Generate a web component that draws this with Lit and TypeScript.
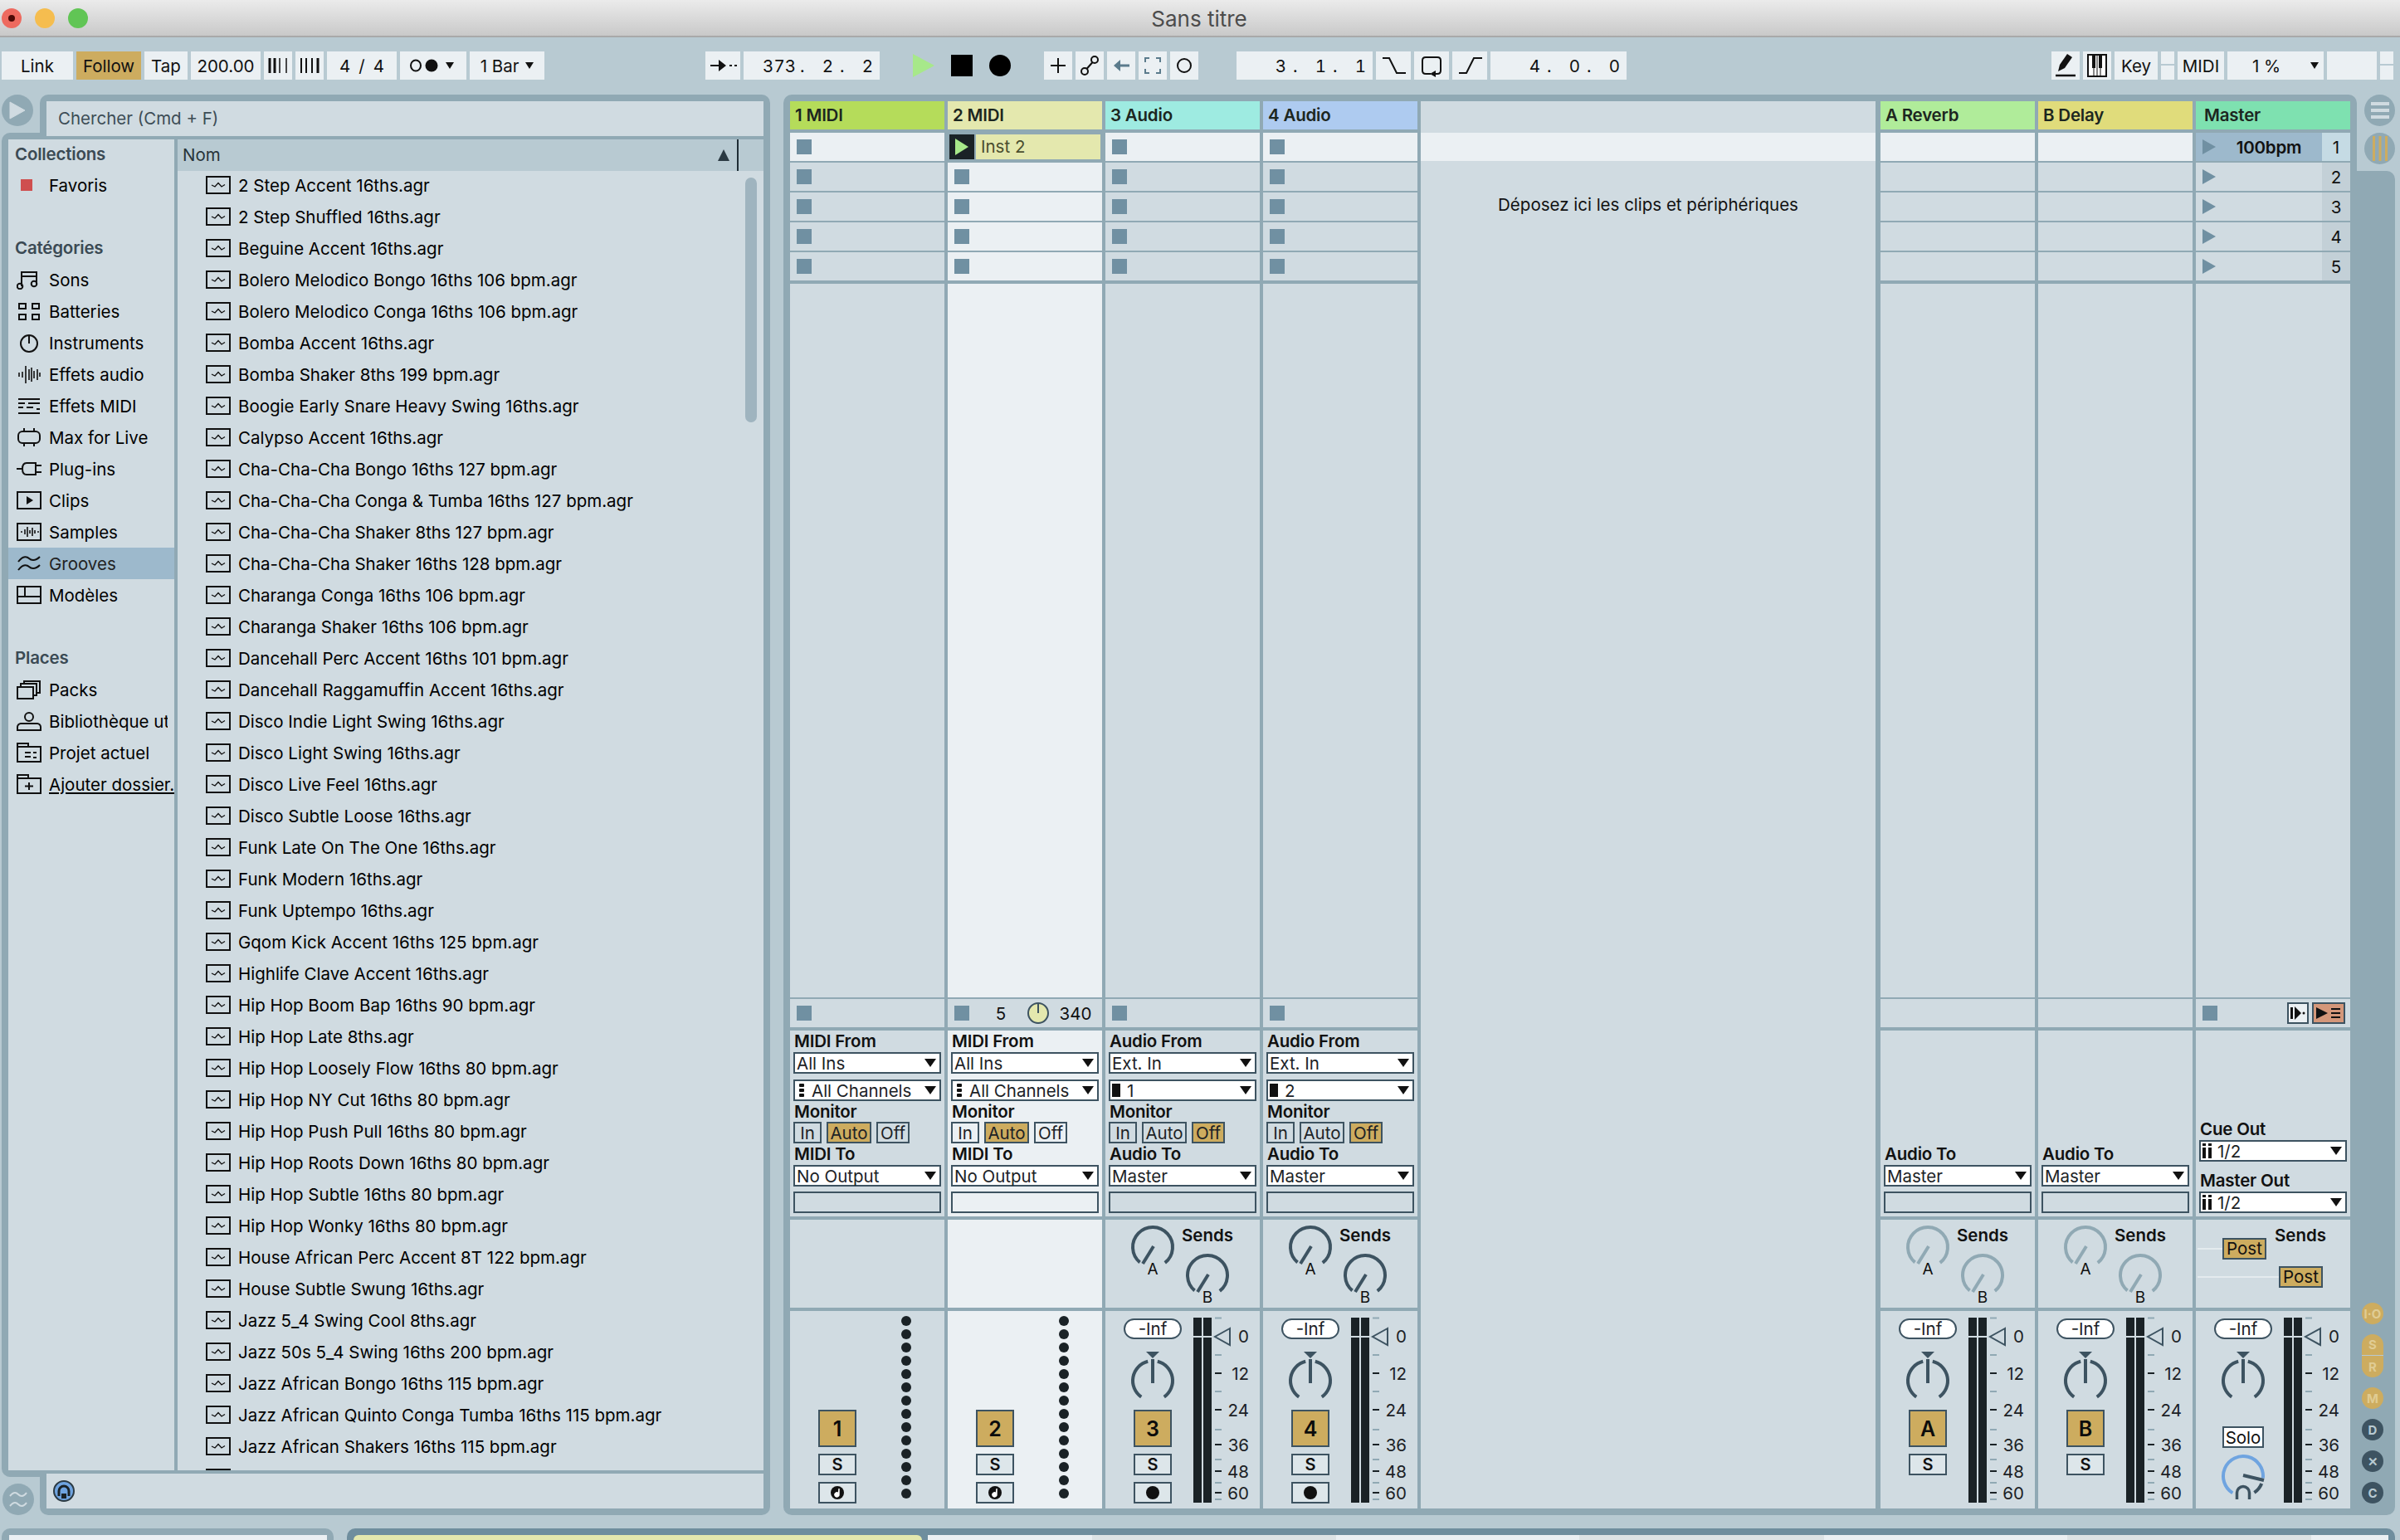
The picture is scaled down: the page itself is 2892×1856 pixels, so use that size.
import { LitElement, html, css, svg } from "lit";
import { customElement } from "lit/decorators.js";

const pt = (cx: number, cy: number, r: number, a: number) => {
  const t = (a * Math.PI) / 180;
  return [cx + r * Math.sin(t), cy - r * Math.cos(t)];
};
const arc = (cx: number, cy: number, r: number, a0: number, a1: number) => {
  const [x0, y0] = pt(cx, cy, r, a0);
  const [x1, y1] = pt(cx, cy, r, a1);
  return `M${x0.toFixed(2)} ${y0.toFixed(2)}A${r} ${r} 0 ${a1 - a0 > 180 ? 1 : 0} 1 ${x1.toFixed(2)} ${y1.toFixed(2)}`;
};

const GROOVES = [
  "2 Step Accent 16ths.agr", "2 Step Shuffled 16ths.agr", "Beguine Accent 16ths.agr",
  "Bolero Melodico Bongo 16ths 106 bpm.agr", "Bolero Melodico Conga 16ths 106 bpm.agr", "Bomba Accent 16ths.agr",
  "Bomba Shaker 8ths 199 bpm.agr", "Boogie Early Snare Heavy Swing 16ths.agr", "Calypso Accent 16ths.agr",
  "Cha-Cha-Cha Bongo 16ths 127 bpm.agr", "Cha-Cha-Cha Conga & Tumba 16ths 127 bpm.agr", "Cha-Cha-Cha Shaker 8ths 127 bpm.agr",
  "Cha-Cha-Cha Shaker 16ths 128 bpm.agr", "Charanga Conga 16ths 106 bpm.agr", "Charanga Shaker 16ths 106 bpm.agr",
  "Dancehall Perc Accent 16ths 101 bpm.agr", "Dancehall Raggamuffin Accent 16ths.agr", "Disco Indie Light Swing 16ths.agr",
  "Disco Light Swing 16ths.agr", "Disco Live Feel 16ths.agr", "Disco Subtle Loose 16ths.agr",
  "Funk Late On The One 16ths.agr", "Funk Modern 16ths.agr", "Funk Uptempo 16ths.agr",
  "Gqom Kick Accent 16ths 125 bpm.agr", "Highlife Clave Accent 16ths.agr", "Hip Hop Boom Bap 16ths 90 bpm.agr",
  "Hip Hop Late 8ths.agr", "Hip Hop Loosely Flow 16ths 80 bpm.agr", "Hip Hop NY Cut 16ths 80 bpm.agr",
  "Hip Hop Push Pull 16ths 80 bpm.agr", "Hip Hop Roots Down 16ths 80 bpm.agr", "Hip Hop Subtle 16ths 80 bpm.agr",
  "Hip Hop Wonky 16ths 80 bpm.agr", "House African Perc Accent 8T 122 bpm.agr", "House Subtle Swung 16ths.agr",
  "Jazz 5_4 Swing Cool 8ths.agr", "Jazz 50s 5_4 Swing 16ths 200 bpm.agr", "Jazz African Bongo 16ths 115 bpm.agr",
  "Jazz African Quinto Conga Tumba 16ths 115 bpm.agr", "Jazz African Shakers 16ths 115 bpm.agr", "",
];

const si = (body: unknown) =>
  html`<svg class="si" viewBox="0 0 30 24" fill="none" stroke="#111" stroke-width="2">${body}</svg>`;

const ICONS: Record<string, unknown> = {
  sons: si(svg`<path d="M6 20V3H24V17M6 8H24"/><circle cx="4" cy="20" r="3.3"/><circle cx="21" cy="17" r="3.3"/>`),
  batteries: si(svg`<rect x="3" y="3" width="8" height="6"/><rect x="19" y="3" width="8" height="6"/><rect x="3" y="16" width="8" height="6"/><rect x="19" y="16" width="8" height="6"/>`),
  instruments: si(svg`<circle cx="15" cy="13" r="10"/><path d="M15 3V13"/>`),
  audio: si(svg`<path stroke-width="1.6" d="M3 10V15M7 9V16M11 2V23M15 6V19M18 4V21M21 8V17M25 6V19M28 10V15"/>`),
  midi: si(svg`<path stroke-width="1.8" d="M2 4H28M2 9H10M14 9H28M2 14H8M12 14H20M2 21H28M24 16H28"/>`),
  max: si(svg`<rect x="2" y="5" width="26" height="14" rx="5"/><path d="M9 1V5M21 1V5M9 19V23M21 19V23"/>`),
  plug: si(svg`<path d="M0 12H7M7 12C7 7 9 5 12 5H23V19H12C9 19 7 17 7 12ZM23 8H30M23 16H30"/>`),
  clips: si(svg`<rect x="1" y="2" width="28" height="20"/><path fill="#111" stroke="none" d="M12 7L20 12L12 17Z"/>`),
  samples: si(svg`<rect x="1" y="2" width="28" height="20"/><path stroke-width="1.6" d="M5 12H7M10 9V15M13 6V18M16 10V14M19 7V17M22 10V14M25 12H27"/>`),
  grooves: si(svg`<path d="M2 10C8 2 13 4 15 6S22 10 28 4M2 20C8 12 13 14 15 16S22 20 28 14"/>`),
  modeles: si(svg`<rect x="1" y="2" width="28" height="20"/><path d="M1 14H29M10 2V14"/>`),
  packs: si(svg`<rect x="1" y="9" width="19" height="14"/><path d="M5 9V5H24V19H20M9 5V2H28V16H24"/>`),
  lib: si(svg`<circle cx="15" cy="7" r="5"/><path d="M1 23V19C1 17 3 15 5 15H25C27 15 29 17 29 19V23Z"/>`),
  proj: si(svg`<path d="M1 23V1H14V5H29V23ZM1 5H14M10 12H17M10 17H17M20 12H24M20 18H24"/>`),
  add: si(svg`<path d="M1 23V1H14V5H29V23ZM1 5H14M15 10V19M10 14.5H20"/>`),
};

const CATS: [string, string][] = [
  ["sons", "Sons"], ["batteries", "Batteries"], ["instruments", "Instruments"], ["audio", "Effets audio"], ["midi", "Effets MIDI"],
  ["max", "Max for Live"], ["plug", "Plug-ins"], ["clips", "Clips"], ["samples", "Samples"], ["grooves", "Grooves"], ["modeles", "Modèles"],
];
const PLACES: [string, string][] = [["packs", "Packs"], ["lib", "Bibliothèque utilisateur"], ["proj", "Projet actuel"], ["add", "Ajouter dossier..."]];

const groove = html`<svg class="gi" viewBox="0 0 30 22" fill="none"><rect x="1" y="1" width="28" height="20" stroke="#111" stroke-width="2"/><path d="M7 11L11 13L15 8.5L19 13L23 10.5" stroke="#111" stroke-width="1.3"/></svg>`;

const tb = (w: number, inner: unknown, cls = "") => html`<div class="tb ${cls}" style="width:${w}px">${inner}</div>`;
const tsvg = (body: unknown, w = 34) => html`<svg width=${w} height="34" viewBox="0 0 ${w} 34" fill="none" stroke="#111" stroke-width="2">${body}</svg>`;
const drop = html`<svg class="ddt" width="10" height="10" viewBox="0 0 10 10"><path d="M0 1H10L5 9Z" fill="#111"/></svg>`;
const seg = (a: string, b: string, c: string) =>
  html`<div class="seg"><span class="d w ${a.length > 1 ? "n3" : ""}">${a}</span><span class="p">.</span><span class="d">${b}</span><span class="p">.</span><span class="d">${c}</span></div>`;

type Kind = "midi" | "audio" | "ret" | "master";
interface Track { name: string; color: string; kind: Kind; num: string; ch?: string; hl?: boolean; }
const TRACKS: Track[] = [
  { name: "1 MIDI", color: "#b5dc5a", kind: "midi", num: "1" },
  { name: "2 MIDI", color: "#e4e8ae", kind: "midi", num: "2", hl: true },
  { name: "3 Audio", color: "#9eebe1", kind: "audio", num: "3", ch: "1" },
  { name: "4 Audio", color: "#aecbf0", kind: "audio", num: "4", ch: "2" },
];
const RETURNS: Track[] = [
  { name: "A Reverb", color: "#b0ec9a", kind: "ret", num: "A" },
  { name: "B Delay", color: "#e0dc7b", kind: "ret", num: "B" },
  { name: "Master", color: "#7ee1b0", kind: "master", num: "" },
];

const TICKS_FAINT = [8.5, 53, 97, 143, 179, 207, 227];
const TICKS = [["0", 30.5], ["12", 75], ["24", 119], ["36", 161], ["48", 193], ["60", 219]] as [string, number][];

const DK = "#3d5361";

@customElement("ableton-track")
class AbletonTrack extends LitElement {
  static properties = { t: { attribute: false } };
  t!: Track;

  static styles = css`
    :host { display: flex; flex-direction: column; width: 186px; flex: none; --cell: #d0dbe1; font-size: 20.5px; }
    :host([hl]) { --cell: #ebf0f3; }
    .head { height: 34px; line-height: 34px; padding-left: 6px; font-weight: 600; letter-spacing: -0.2px; color: #1c2620; flex: none; }
    .head.m { padding-left: 10px; }
    .clips { display: flex; flex-direction: column; gap: 2px; margin-top: 4px; flex: none; }
    .clip { height: 34px; background: var(--cell); display: flex; align-items: center; padding-left: 8px; box-sizing: border-box; }
    .clip.sel { background: #ebf0f3; }
    .stop { width: 18px; height: 18px; background: #7090a2; flex: none; }
    .blank { height: 860px; margin-top: 4px; background: var(--cell); flex: none; }
    .playing { padding: 2px; gap: 2px; background: #90a9b4; align-items: stretch; }
    .pbtn { width: 30px; background: #1a2226; display: flex; align-items: center; justify-content: center; }
    .pname { flex: 1; background: #e4e8ae; color: #4a4d2e; padding-left: 6px; line-height: 30px; }
    .scene { padding: 0; }
    .scene .l { width: 152px; height: 100%; display: flex; align-items: center; padding-left: 8px; box-sizing: border-box; }
    .scene .tri { width: 16px; height: 18px; flex: none; }
    .scene .lab { width: 128px; text-align: center; font-weight: 600; color: #111; }
    .scene .n { width: 34px; height: 100%; background: #c3d0d7; display: flex; align-items: center; justify-content: center; color: #111; }
    .scene.on .l { background: #9db9cc; }
    .scene.on .n { background: #c5dbe4; }
    .srow { height: 34px; margin-top: 2px; background: #d0dbe1; display: flex; align-items: center; padding-left: 8px; flex: none; color: #111; }
    .five { width: 36px; margin-left: 20px; text-align: center; }
    .tempo { margin-left: 14px; }
    .beats { width: 44px; margin-left: 10px; text-align: center; }
    .mbtns { margin-left: auto; margin-right: 6px; display: flex; gap: 4px; }
    .mb { height: 26px; border: 2px solid #3d5361; box-sizing: border-box; display: flex; align-items: center; justify-content: center; }
    .io { height: 224px; margin-top: 4px; background: var(--cell); padding: 0 4px 4px; box-sizing: border-box; display: flex; flex-direction: column; flex: none; }
    .io.end { justify-content: flex-end; }
    .lab { height: 26px; line-height: 26px; font-weight: 600; letter-spacing: -0.2px; color: #111; padding-left: 1px; flex: none; white-space: nowrap; }
    .lab.mon { height: 25px; }
    .ch { height: 26px; border: 2px solid #3d5361; background: #fff; box-sizing: border-box; display: flex; align-items: center; padding: 0 4px 0 2px; color: #1c2226; flex: none; gap: 6px; }
    .ch.gap { margin-top: 7px; }
    .ch .tx { flex: 1; white-space: nowrap; }
    .ch.gapm { margin-bottom: 10px; }
    .box { height: 26px; margin-top: 6px; border: 2px solid #3d5361; box-sizing: border-box; flex: none; }
    .mon-row { display: flex; gap: 6px; height: 26px; flex: none; }
    .mon-b { height: 26px; border: 2px solid #3d5361; box-sizing: border-box; display: flex; align-items: center; justify-content: center; color: #1c2226; }
    .on { background: #cdac5f; }
    .sends { height: 106px; margin-top: 4px; background: var(--cell); flex: none; }
    .sends svg { display: block; }
    .svgt { font: 600 20.5px Inter, "Liberation Sans", sans-serif; fill: #111; }
    .sendbtn { fill: #cdac5f; stroke: #3d5361; stroke-width: 2; }
    .mixer { height: 238px; margin-top: 4px; background: var(--cell); display: flex; flex: none; }
    .ml { width: 106px; padding-left: 8px; box-sizing: border-box; display: flex; flex-direction: column; align-items: center; flex: none; }
    .pill { width: 70px; height: 25px; margin-top: 9px; border: 2px solid #3d5361; border-radius: 13px; background: #fff; box-sizing: border-box; display: flex; align-items: center; justify-content: center; color: #1c2226; flex: none; }
    .ph { height: 62px; width: 60px; margin-top: 15px; flex: none; }
    .act { width: 46px; height: 45px; margin-top: 8px; border: 2px solid #3d5361; background: #cdac5f; box-sizing: border-box; display: flex; align-items: center; justify-content: center; font-size: 25px; font-weight: 600; color: #0c0c0c; flex: none; }
    .mini { width: 46px; height: 26px; margin-top: 8px; border: 2px solid #3d5361; background: #dde6ea; box-sizing: border-box; display: flex; align-items: center; justify-content: center; color: #111; font-weight: 600; font-size: 20px; flex: none; }
    .solo { width: 50px; height: 26px; margin-top: 8px; border: 2px solid #3d5361; background: #fff; box-sizing: border-box; display: flex; align-items: center; justify-content: center; color: #111; flex: none; }
    .solo.m { margin-top: 28px; }
    .cue { margin-top: 4px; width: 60px; height: 62px; flex: none; }
    .armdot { width: 16px; height: 16px; border-radius: 50%; background: #111; }
    .spacer { height: 111px; flex: none; }
    .dots { display: flex; flex-direction: column; gap: 4px; margin-left: 28px; padding-top: 6px; }
    .dot { width: 12px; height: 12px; border-radius: 50%; background: #1a2226; }
    .meter { display: flex; gap: 2px; padding-top: 8px; height: 223px; flex: none; }
    .bar { width: 10px; display: flex; flex-direction: column; gap: 2px; height: 223px; }
    .bar i { display: block; background: #1a2226; }
    .bar .a { height: 22px; }
    .bar .b { flex: 1; }
    .scale { flex: none; display: block; }
  `;

  private chooser(text: string, icon: unknown = null, cls = "") {
    return html`<div class="ch ${cls}">${icon}<span class="tx">${text}</span><svg width="14" height="12" viewBox="0 0 14 12"><path d="M0 1H14L7 11Z" fill="#111"/></svg></div>`;
  }

  private monitor(active: string) {
    const widths: Record<string, number> = { In: 34, Auto: 54, Off: 40 };
    return html`<div class="mon-row">${["In", "Auto", "Off"].map((m) => html`<div class="mon-b ${m === active ? "on" : ""}" style="width:${widths[m]}px">${m}</div>`)}</div>`;
  }

  private io(t: Track) {
    const dots = html`<svg width="8" height="18" viewBox="0 0 8 18" style="margin-left:2px;margin-right:2px"><rect x="1" y="1" width="6" height="4" rx="1" fill="#111"/><rect x="1" y="7" width="6" height="4" rx="1" fill="#111"/><rect x="1" y="13" width="6" height="4" rx="1" fill="#111"/></svg>`;
    const mono = html`<svg width="10" height="16" viewBox="0 0 10 16" style="margin-right:2px"><rect width="10" height="16" fill="#111"/></svg>`;
    const ii = html`<svg width="12" height="18" viewBox="0 0 12 18"><rect x="0" y="0" width="4" height="3" fill="#111"/><rect x="7" y="0" width="4" height="3" fill="#111"/><rect x="0" y="5" width="4" height="13" fill="#111"/><rect x="7" y="5" width="4" height="13" fill="#111"/></svg>`;
    if (t.kind === "midi")
      return html`<div class="io"><div class="lab">MIDI From</div>${this.chooser("All Ins")}${this.chooser("All Channels", dots, "gap")}<div class="lab mon">Monitor</div>${this.monitor("Auto")}<div class="lab">MIDI To</div>${this.chooser("No Output")}<div class="box"></div></div>`;
    if (t.kind === "audio")
      return html`<div class="io"><div class="lab">Audio From</div>${this.chooser("Ext. In")}${this.chooser(t.ch!, mono, "gap")}<div class="lab mon">Monitor</div>${this.monitor("Off")}<div class="lab">Audio To</div>${this.chooser("Master")}<div class="box"></div></div>`;
    if (t.kind === "ret")
      return html`<div class="io end"><div class="lab">Audio To</div>${this.chooser("Master")}<div class="box"></div></div>`;
    return html`<div class="io end"><div class="lab">Cue Out</div>${this.chooser("1/2", ii, "gapm")}<div class="lab">Master Out</div>${this.chooser("1/2", ii)}</div>`;
  }

  private sends(t: Track) {
    if (t.kind === "midi") return html`<div class="sends"></div>`;
    if (t.kind === "master")
      return html`<div class="sends"><svg width="186" height="106">
        <path d="M2 35H32M2 69H100" stroke="#e4ebee" stroke-width="2"/>
        <rect x="33" y="23" width="51" height="24" class="sendbtn"/><text x="58.5" y="42" text-anchor="middle" class="svgt" style="font-weight:400">Post</text>
        <text x="126" y="26" text-anchor="middle" class="svgt">Sends</text>
        <rect x="101" y="57" width="51" height="24" class="sendbtn"/><text x="126.5" y="76" text-anchor="middle" class="svgt" style="font-weight:400">Post</text>
      </svg></div>`;
    const col = t.kind === "ret" ? "#90a9b4" : DK;
    const knob = (cx: number, cy: number, l: string) => svg`
      <path d=${arc(cx, cy, 24, -140, 142)} fill="none" stroke=${col} stroke-width="4"/>
      <path d="M${cx + 1} ${cy - 1}L${cx - 12} ${cy + 20}" stroke=${col} stroke-width="4"/>
      <text x=${cx} y=${cy + 33} text-anchor="middle" class="svgt" style="font-weight:400;font-size:19px">${l}</text>`;
    return html`<div class="sends"><svg width="186" height="106">
      ${knob(57, 33, "A")}${knob(123, 67, "B")}
      <text x="123" y="26" text-anchor="middle" class="svgt">Sends</text>
    </svg></div>`;
  }

  private mixer(t: Track) {
    const panKnob = html`<svg class="ph" viewBox="0 0 60 62" fill="none" stroke=${DK} stroke-width="4">
      <path d="M22 0H38L30 8Z" fill=${DK} stroke="none"/>
      <path d=${arc(30, 35, 24, -145, -14)}/><path d=${arc(30, 35, 24, 14, 145)}/><path d="M30 9V38"/></svg>`;
    const meter = html`<div class="meter"><div class="bar"><i class="a"></i><i class="b"></i></div><div class="bar"><i class="a"></i><i class="b"></i></div></div>
      <svg class="scale" width="58" height="238" viewBox="128 0 58 238">
        ${TICKS_FAINT.map((y) => svg`<path d="M132 ${y}H140" stroke="#90a9b4" stroke-width="2"/>`)}
        ${TICKS.slice(1).map(([, y]) => svg`<path d="M132 ${y}H140" stroke="#1a2226" stroke-width="2"/>`)}
        <path d="M150 21L132 31L150 41Z" fill="none" stroke=${DK} stroke-width="2"/>
        ${TICKS.map(([l, y]) => svg`<text x="173" y=${y + 7.5} text-anchor="end" class="svgt" style="font-weight:400;fill:#1c2226">${l}</text>`)}
      </svg>`;
    if (t.kind === "midi")
      return html`<div class="mixer"><div class="ml"><div class="spacer"></div><div class="act">${t.num}</div><div class="mini">S</div>
        <div class="mini"><svg width="18" height="18" viewBox="0 0 18 18"><circle cx="9" cy="9" r="8" fill="#111"/><path d="M11 4V11A2.6 2.6 0 1 1 9.5 9" fill="#fff" stroke="#fff" stroke-width="1.4"/></svg></div></div>
        <div class="dots">${Array.from({ length: 14 }, () => html`<div class="dot"></div>`)}</div></div>`;
    if (t.kind === "audio")
      return html`<div class="mixer"><div class="ml"><div class="pill">-Inf</div>${panKnob}<div class="act">${t.num}</div><div class="mini">S</div><div class="mini"><div class="armdot"></div></div></div>${meter}</div>`;
    if (t.kind === "ret")
      return html`<div class="mixer"><div class="ml"><div class="pill">-Inf</div>${panKnob}<div class="act">${t.num}</div><div class="mini">S</div></div>${meter}</div>`;
    return html`<div class="mixer"><div class="ml"><div class="pill">-Inf</div>${panKnob}<div class="solo m">Solo</div>
      <svg class="cue" viewBox="0 0 60 62" fill="none">
        <path d=${arc(30, 30, 24, -148, 96)} stroke="#6fa4e0" stroke-width="4"/>
        <path d=${arc(30, 30, 24, 112, 146)} stroke=${DK} stroke-width="4"/>
        <path d="M30 29L55 35" stroke=${DK} stroke-width="4"/>
        <path d="M22.5 58V50A7.5 7.5 0 0 1 37.5 50V58" stroke=${DK} stroke-width="3.5"/>
      </svg></div>${meter}</div>`;
  }

  render() {
    const t = this.t;
    if (t.kind === "master") {
      return html`<div class="head m" style="background:${t.color}">${t.name}</div>
      <div class="clips">${[1, 2, 3, 4, 5].map((n) => html`<div class="clip scene ${n === 1 ? "on" : ""}"><div class="l"><svg class="tri" viewBox="0 0 16 18"><path d="M0 0L16 9L0 18Z" fill="#7090a2"/></svg><span class="lab" style="padding:0;height:auto;line-height:normal">${n === 1 ? "100bpm" : ""}</span></div><div class="n">${n}</div></div>`)}</div>
      <div class="blank"></div>
      <div class="srow"><div class="stop"></div><div class="mbtns">
        <div class="mb" style="width:26px;background:#ebf0f3"><svg width="18" height="16" viewBox="0 0 18 16"><rect x="0" y="1" width="3" height="14" fill="#111"/><path d="M5 0L13 8L5 16Z" fill="#111"/><circle cx="16" cy="8" r="1.5" fill="#111"/></svg></div>
        <div class="mb" style="width:40px;background:#d4977a"><svg width="30" height="14" viewBox="0 0 30 14"><path d="M0 0L14 7L0 14Z" fill="#111"/><path d="M18 2H29M18 7H29M18 12H29" stroke="#111" stroke-width="2"/></svg></div>
      </div></div>
      ${this.io(t)}${this.sends(t)}${this.mixer(t)}`;
    }
    const clipRows = [0, 1, 2, 3, 4].map((r) => {
      if (t.hl && r === 0)
        return html`<div class="clip playing"><div class="pbtn"><svg width="16" height="20" viewBox="0 0 16 20"><path d="M0 0L16 10L0 20Z" fill="#a7e88a"/></svg></div><div class="pname">Inst 2</div></div>`;
      const cls = r === 0 ? "sel" : "";
      return html`<div class="clip ${cls}">${t.kind === "ret" ? "" : html`<div class="stop"></div>`}</div>`;
    });
    return html`<div class="head" style="background:${t.color}">${t.name}</div>
    <div class="clips">${clipRows}</div>
    <div class="blank"></div>
    <div class="srow">${t.kind === "ret" ? "" : html`<div class="stop"></div>`}
      ${t.hl ? html`<div class="five">5</div><svg class="tempo" width="26" height="26" viewBox="0 0 26 26"><circle cx="13" cy="13" r="12" fill="#e4e8ae" stroke=${DK} stroke-width="2"/><path d="M13 2V13" stroke=${DK} stroke-width="2"/></svg><div class="beats">340</div>` : ""}
    </div>
    ${this.io(t)}${this.sends(t)}${this.mixer(t)}`;
  }
}

@customElement("app-root")
export class AppRoot extends LitElement {
  static styles = css`
    :host { display: block; width: 2892px; height: 1856px; overflow: hidden; background: #b8cad2; font-family: Inter, "Liberation Sans", sans-serif; font-size: 20.5px; color: #111; }
    .title { height: 43px; border-bottom: 2px solid #a9a9a9; background: linear-gradient(#ebebeb, #c9c9c9); display: flex; align-items: center; box-sizing: content-box; }
    .lights { display: flex; gap: 16px; padding-left: 2px; width: 0; flex: none; }
    .light { width: 24px; height: 24px; border-radius: 50%; flex: none; display: flex; align-items: center; justify-content: center; }
    .light i { width: 8px; height: 8px; border-radius: 50%; background: #4d0a06; display: block; }
    .ttext { flex: 1; text-align: center; font-size: 26px; color: #4c4c4c; padding: 2px 4px 0 0; }
    .toolbar { height: 34px; margin-top: 17px; padding-left: 2px; display: flex; flex: none; }
    .grp { display: flex; gap: 4px; flex: none; }
    .tb { height: 34px; background: #ebf0f3; display: flex; align-items: center; justify-content: center; flex: none; box-sizing: border-box; color: #111; position: relative; }
    .tb.act { background: #cdac5f; }
    .tb.split { background: linear-gradient(#ebf0f3 0 15px, #b8cad2 15px 17px, #ebf0f3 17px); }
    .ddt { margin-left: 8px; }
    .seg { display: flex; justify-content: flex-end; width: 100%; padding-right: 8px; box-sizing: border-box; font-variant-numeric: tabular-nums; }
    .d { width: 24px; text-align: right; flex: none; }
    .d.w { width: 48px; }
    .d.n3 { margin-right: -3px; }
    .p { width: 24px; padding-left: 8px; box-sizing: border-box; flex: none; }
    .sig { display: flex; gap: 10px; }
    .main { display: flex; height: 1712px; margin-top: 18px; padding-left: 2px; }
    .browser { width: 926px; flex: none; display: flex; flex-direction: column; }
    .brow1 { display: flex; height: 50px; position: relative; z-index: 1; flex: none; }
    .cbtn { width: 38px; height: 38px; border-radius: 50%; background: #90a9b4; flex: none; display: flex; align-items: center; justify-content: center; }
    .sframe { margin-left: 8px; flex: 1; background: #90a9b4; border-radius: 10px 10px 0 0; padding: 8px 8px 0; }
    .search { height: 42px; background: #d0dbe1; color: #3d4d56; line-height: 42px; padding-left: 14px; }
    .bmain { height: 1620px; margin-top: -4px; background: #90a9b4; border-radius: 10px 0 0 10px; padding: 8px 8px 8px; box-sizing: border-box; display: flex; gap: 4px; flex: none; }
    .side { width: 200px; background: #d0dbe1; height: 1604px; flex: none; overflow: hidden; }
    .sh { height: 38px; line-height: 38px; padding-left: 8px; color: #3b4a54; font-weight: 600; letter-spacing: -0.2px; }
    .sh.first { height: 36px; line-height: 36px; }
    .si-row { height: 38px; display: flex; align-items: center; white-space: nowrap; overflow: hidden; color: #000; }
    .si-row.sel { background: #9db9cc; color: #222; }
    .si { width: 30px; height: 24px; margin-left: 10px; margin-right: 9px; flex: none; }
    .fav { width: 14px; height: 14px; background: #cf4f4f; margin-left: 15px; margin-right: 20px; flex: none; }
    .u { text-decoration: underline; }
    .clipname { width: 143px; overflow: hidden; flex: none; }
    .gap { height: 38px; }
    .list { flex: 1; background: #d0dbe1; position: relative; overflow: hidden; height: 1604px; }
    .lhead { height: 38px; background: #b8cad2; position: relative; line-height: 38px; padding-left: 6px; color: #28343a; display: flex; }
    .sortw { margin-left: auto; width: 55px; display: flex; align-items: center; flex: none; height: 38px; }
    .sortb { width: 25px; height: 38px; box-sizing: border-box; border-right: 2px solid #1f2d35; display: flex; align-items: center; justify-content: flex-start; }
    .rows { margin-top: -2px; }
    .row { height: 38px; display: flex; align-items: center; padding-left: 34px; white-space: nowrap; color: #000; }
    .gi { width: 30px; height: 22px; flex: none; margin-right: 9px; }
    .sbar { position: absolute; left: 684px; top: 46px; width: 14px; height: 295px; border-radius: 7px; background: #9fb4bf; }
    .bbot { display: flex; height: 54px; margin-top: -8px; position: relative; z-index: 1; flex: none; }
    .cbtn2 { margin-top: 16px; margin-left: 1px; margin-right: 7px; }
    .bframe { flex: 1; background: #90a9b4; border-radius: 0 0 10px 10px; padding: 4px 8px 8px; }
    .binner { height: 42px; background: #d0dbe1; display: flex; align-items: flex-start; padding-left: 8px; padding-top: 8px; box-sizing: border-box; }
    .session { margin-left: 16px; width: 1896px; flex: none; background: #90a9b4; border-radius: 10px 10px 0 10px; padding: 8px 8px 8px; box-sizing: border-box; display: flex; gap: 4px; }
    .dropz { width: 548px; flex: none; background: #d0dbe1; padding-top: 38px; box-sizing: border-box; margin-right: 2px; }
    .band { height: 34px; background: #ebf0f3; }
    .dtext { margin-top: 41px; text-align: center; line-height: 24px; color: #111; }
    .rail { width: 46px; flex: none; display: flex; flex-direction: column; }
    .rc { width: 37px; height: 38px; margin-left: 9px; border-radius: 50%; background: #90a9b4; flex: none; display: flex; align-items: center; justify-content: center; margin-bottom: 8px; }
    .rframe { flex: 1; background: #90a9b4; border-radius: 0 10px 10px 0; display: flex; flex-direction: column; justify-content: flex-end; padding: 0 0 14px 6px; gap: 12px; }
    .let { width: 26px; height: 26px; border-radius: 50%; display: flex; align-items: center; justify-content: center; font-size: 15px; font-weight: 700; background: #cdac5f; color: #e0cc94; }
    .let.dark { background: #3d5361; color: #b8cad2; }
    .srpill { width: 26px; height: 52px; display: flex; flex-direction: column; background: transparent; gap: 0; }
    .srpill div { height: 26px; background: #cdac5f; color: #e0cc94; font-size: 15px; font-weight: 700; display: flex; align-items: center; justify-content: center; }
    .srpill .s { border-radius: 13px 13px 0 0; border-bottom: 1px solid #b8cad2; box-sizing: border-box; }
    .srpill .r { border-radius: 0 0 13px 13px; }
    .bottom { display: flex; margin-top: 16px; height: 14px; padding-left: 2px; }
    .b1 { width: 400px; background: #90a9b4; border-radius: 10px 10px 0 0; padding: 8px 8px 0 9px; box-sizing: border-box; flex: none; }
    .b1 div { height: 6px; background: #ebf0f3; }
    .b2 { margin-left: 16px; width: 2468px; background: #6f8e9e; border-radius: 10px 10px 0 0; padding: 8px 8px 0 8px; box-sizing: border-box; display: flex; flex: none; }
    .by { width: 685px; height: 6px; background: #e4e8ae; border-radius: 6px 6px 0 0; margin-right: 7px; flex: none; }
    .bs { height: 6px; flex: none; }
  `;

  render() {
    const bars1 = tsvg(svg`<path d="M7 8V26" stroke-width="3"/><path d="M13 8V26" stroke-width="3"/><path d="M19 8V26" stroke-width="1.5"/><path d="M27 8V26" stroke-width="1.5"/>`);
    const bars2 = tsvg(svg`<path d="M7 8V26" stroke-width="2"/><path d="M13 8V26" stroke-width="2"/><path d="M20 8V26" stroke-width="2"/><path d="M27 8V26" stroke-width="3"/>`);
    return html`
    <div class="title">
      <div class="lights">
        <div class="light" style="background:#ee6a5f"><i></i></div>
        <div class="light" style="background:#f5bd4f"></div>
        <div class="light" style="background:#61c555"></div>
      </div>
      <div class="ttext">Sans titre</div>
    </div>
    <div class="toolbar">
      <div class="grp">
        ${tb(86, "Link")}${tb(78, "Follow", "act")}${tb(52, "Tap")}${tb(84, "200.00")}${tb(34, bars1)}${tb(34, bars2)}
        ${tb(84, html`<div class="sig"><span>4</span><span>/</span><span>4</span></div>`)}
        ${tb(80, html`<svg width="36" height="16" viewBox="0 0 36 16" fill="none" style="margin-left:-4px"><ellipse cx="8" cy="8" rx="6" ry="6.5" stroke="#111" stroke-width="2"/><circle cx="27" cy="8" r="7.5" fill="#111"/></svg>${drop}`)}
        ${tb(90, html`1 Bar${drop}`)}
      </div>
      <div class="grp" style="margin-left:194px">
        ${tb(42, html`<svg width="36" height="24" viewBox="0 0 36 24"><path d="M3 11H13V13H3ZM13 5L22 12L13 19Z" fill="#111"/><path d="M26 11H29V13H26ZM32 11H35V13H32Z" fill="#111"/></svg>`)}
        ${tb(164, seg("373", "2", "2"))}
      </div>
      <div class="grp" style="margin-left:40px;gap:20px">
        <svg width="26" height="34" viewBox="0 0 26 34"><path d="M0 3L26 17L0 31V3Z" fill="#a7e88a"/></svg>
        <svg width="26" height="34" viewBox="0 0 26 34"><rect y="4" width="26" height="26" fill="#000"/></svg>
        <svg width="26" height="34" viewBox="0 0 26 34"><circle cx="13" cy="17" r="13" fill="#000"/></svg>
      </div>
      <div class="grp" style="margin-left:40px">
        ${tb(34, tsvg(svg`<path d="M17 8V26M8 17H26"/>`))}
        ${tb(34, tsvg(svg`<circle cx="11" cy="24" r="4"/><circle cx="23" cy="10" r="4"/><path d="M13.5 21L20.5 13"/>`))}
        ${tb(34, tsvg(svg`<path d="M27 17H14" stroke="#5b7b8c" stroke-width="3"/><path d="M8 17L16 10V24Z" fill="#5b7b8c" stroke="none"/>`))}
        ${tb(34, tsvg(svg`<path d="M8 13V8H13M21 8H26V13M26 21V26H21M13 26H8V21" stroke="#5b7b8c"/>`))}
        ${tb(34, tsvg(svg`<ellipse cx="17" cy="17" rx="8" ry="8" stroke-width="2"/>`))}
      </div>
      <div class="grp" style="margin-left:46px">
        ${tb(164, seg("3", "1", "1"))}
        ${tb(42, tsvg(svg`<path d="M8 8H16L25 26H36"/>`, 42))}
        ${tb(42, tsvg(svg`<path d="M20 27H14C11 27 10 25 10 23V11C10 9 11 7 14 7H28C31 7 32 9 32 11V23C32 25 31 27 28 27H24" stroke-width="2"/><path d="M26 23V31L19 27Z" fill="#111" stroke="none"/>`, 42))}
        ${tb(42, tsvg(svg`<path d="M8 26H17L26 8H36"/>`, 42))}
        ${tb(164, seg("4", "0", "0"))}
      </div>
      <div class="grp" style="margin-left:512px">
        ${tb(34, html`<svg width="24" height="30" viewBox="0 0 24 30"><path d="M3 22L5 14L14 1L20 5L11 18Z" fill="#111"/><path d="M0 27H24" stroke="#111" stroke-width="2.5"/></svg>`)}
        ${tb(34, html`<svg width="24" height="28" viewBox="0 0 24 28"><rect x="1" y="1" width="22" height="26" fill="#fff" stroke="#111" stroke-width="2"/><path d="M6 2H10V17H6ZM14 2H18V17H14Z" fill="#111"/><path d="M8 17V27M16 17V27M12 2V27" stroke="#111" stroke-width="1"/></svg>`)}
        ${tb(52, "Key")}${tb(16, "", "split")}${tb(56, "MIDI")}
        ${tb(116, html`<span style="margin-left:24px;margin-right:28px">1 %</span>${drop}`)}
        ${tb(60, "")}${tb(16, "", "split")}
      </div>
    </div>
    <div class="main">
      <div class="browser">
        <div class="brow1">
          <div class="cbtn"><svg width="20" height="24" viewBox="0 0 20 24"><path d="M1 2L19 12L1 22Z" fill="#d0dbe1" stroke="#d0dbe1"/></svg></div>
          <div class="sframe"><div class="search">Chercher (Cmd + F)</div></div>
        </div>
        <div class="bmain">
          <div class="side">
            <div class="sh first">Collections</div>
            <div class="si-row"><div class="fav"></div>Favoris</div>
            <div class="gap"></div>
            <div class="sh">Catégories</div>
            ${CATS.map(([k, l]) => html`<div class="si-row ${l === "Grooves" ? "sel" : ""}">${ICONS[k]}${l}</div>`)}
            <div class="gap"></div>
            <div class="sh">Places</div>
            ${PLACES.map(([k, l]) => html`<div class="si-row">${ICONS[k]}<span class=${k === "add" ? "u" : k === "lib" ? "clipname" : ""}>${l}</span></div>`)}
          </div>
          <div class="list">
            <div class="lhead">Nom<div class="sortw"><div class="sortb"><svg width="14" height="14" viewBox="0 0 14 14"><path d="M7 0L14 14H0Z" fill="#2b3a43"/></svg></div></div></div>
            <div class="rows">${GROOVES.map((g) => html`<div class="row">${groove}${g}</div>`)}</div>
            <div class="sbar"></div>
          </div>
        </div>
        <div class="bbot">
          <div class="cbtn cbtn2"><svg width="24" height="26" viewBox="0 0 24 26" fill="none" stroke="#d0dbe1" stroke-width="2"><path d="M2 9C7 3 10 5 12 7S18 11 22 5M2 21C7 15 10 17 12 19S18 23 22 17"/></svg></div>
          <div class="bframe"><div class="binner"><svg width="26" height="26" viewBox="0 0 26 26"><circle cx="13" cy="13" r="12" fill="#6fa4e0" stroke="#2b3a43" stroke-width="2"/><path d="M7 19V13A6 6 0 0 1 19 13V19" fill="none" stroke="#1a2226" stroke-width="3"/><rect x="10" y="16" width="6" height="6" fill="#1a2226"/></svg></div></div>
        </div>
      </div>
      <div class="session">
        ${TRACKS.map((t) => html`<ableton-track .t=${t} ?hl=${t.hl}></ableton-track>`)}
        <div class="dropz"><div class="band"></div><div class="dtext">Déposez ici les clips et périphériques</div></div>
        ${RETURNS.map((t) => html`<ableton-track .t=${t}></ableton-track>`)}
      </div>
      <div class="rail">
        <div class="rc"><svg width="22" height="24" viewBox="0 0 22 24" fill="#d0dbe1"><rect y="2" width="22" height="4"/><rect y="10" width="22" height="4"/><rect y="18" width="22" height="4"/></svg></div>
        <div class="rc"><svg width="20" height="30" viewBox="0 0 20 30" fill="#cdac5f"><rect x="1" y="0" width="3" height="30"/><rect x="8.5" y="0" width="3" height="30"/><rect x="16" y="0" width="3" height="30"/></svg></div>
        <div class="rframe">
          <div class="let">I·O</div>
          <div class="srpill"><div class="s">S</div><div class="r">R</div></div>
          <div class="let">M</div>
          <div class="let dark">D</div>
          <div class="let dark">✕</div>
          <div class="let dark">C</div>
        </div>
      </div>
    </div>
    <div class="bottom">
      <div class="b1"><div></div></div>
      <div class="b2">
        <div class="by"></div>
        ${[[198, "#ebf0f3"], [294, "#dde3e5"], [293, "#ebf0f3"], [295, "#dde3e5"], [293, "#ebf0f3"], [294, "#dde3e5"], [93, "#ebf0f3"]].map(([w, c]) => html`<div class="bs" style="width:${w}px;background:${c}"></div>`)}
      </div>
    </div>`;
  }
}
